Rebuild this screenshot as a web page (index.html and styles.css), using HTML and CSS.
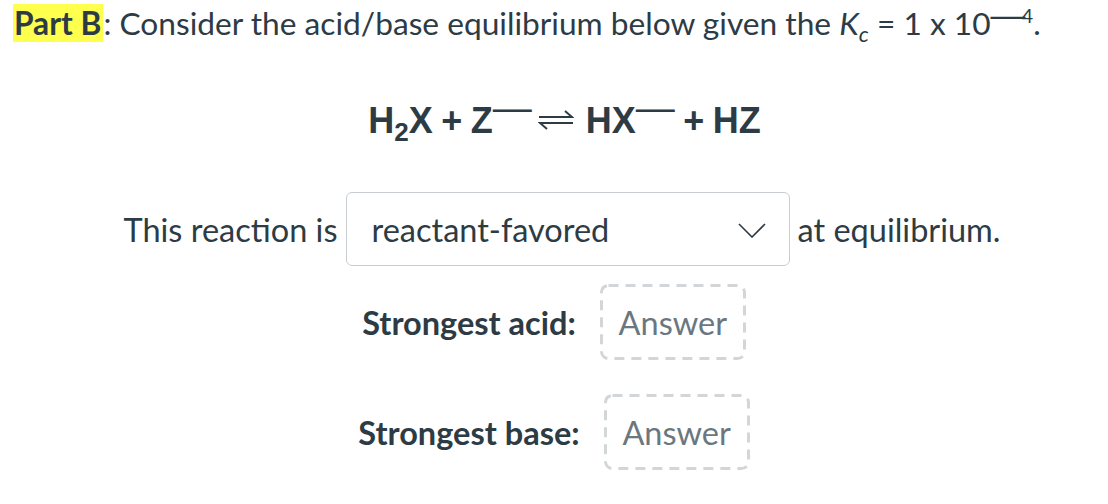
FILE: index.html
```html
<!DOCTYPE html>
<html>
<head>
<meta charset="utf-8">
<link rel="stylesheet" href="styles.css">
</head>
<body>
<div class="page">
  <p class="title"><span class="hl"><b>Part B</b></span>: Consider the acid/base equilibrium below given the <i>K<sub>c</sub></i> = 1 x 10<span class="expdash">—</span><sup class="expnum">4</sup>.</p>

  <div class="equation">
    <span>H<sub>2</sub>X + Z<sup class="neg">—</sup></span>
    <svg class="eqarrow" width="36" height="22" viewBox="0 0 36 22"><path d="M1 7 H34 L27 1" fill="none" stroke="#2d3b45" stroke-width="2"/><path d="M35 13 H2 L9 19" fill="none" stroke="#2d3b45" stroke-width="2"/></svg>
    <span>HX<sup class="neg">—</sup> + HZ</span>
  </div>

  <div class="sentence">
    <span>This reaction is</span>
    <div class="select">
      <span>reactant-favored</span>
      <svg class="chev" width="28" height="15" viewBox="0 0 28 15"><path d="M1 1 L14 14 L27 1" fill="none" stroke="#2d3b45" stroke-width="1.6"/></svg>
    </div>
    <span>at equilibrium.</span>
  </div>

  <div class="drop acid">
    <span class="label">Strongest acid:</span>
    <div class="answer">
      <svg class="dash" width="146" height="76" viewBox="0 0 146 76"><rect x="1.5" y="1.5" width="143" height="73" rx="7" fill="none" stroke="#d3d6d9" stroke-width="3" stroke-dasharray="10 7"/></svg>
      <span>Answer</span>
    </div>
  </div>
  <div class="drop base">
    <span class="label">Strongest base:</span>
    <div class="answer">
      <svg class="dash" width="146" height="76" viewBox="0 0 146 76"><rect x="1.5" y="1.5" width="143" height="73" rx="7" fill="none" stroke="#d3d6d9" stroke-width="3" stroke-dasharray="10 7"/></svg>
      <span>Answer</span>
    </div>
  </div>
</div>
</body>
</html>
```
FILE: styles.css
```css
html, body {
  margin: 0;
  padding: 0;
  background: #fff;
}
.page {
  width: 1108px;
  height: 504px;
  font-family: Lato, "Liberation Sans", sans-serif;
  color: #2d3b45;
  font-size: 32.5px;
}
.title {
  margin: 0;
  padding: 4px 0 0 13px;
  line-height: 38px;
  font-size: 31.7px;
  white-space: nowrap;
}
.hl {
  background: #ffff4d;
  padding: 0 2px 0 1px;
}
.title i {
  font-style: italic;
}
.title sub {
  font-size: 22px;
  vertical-align: -7px;
  line-height: 0;
}
.expdash {
  font-family: "Liberation Sans", Arial, sans-serif;
  font-size: 35px;
  vertical-align: 8px;
  line-height: 0;
}
.expnum {
  font-size: 20px;
  vertical-align: 12px;
  line-height: 0;
  margin-left: -4px;
}
.equation {
  display: flex;
  justify-content: center;
  align-items: center;
  gap: 6px;
  margin-top: 54px;
  font-family: "Liberation Sans", Arial, sans-serif;
  font-weight: bold;
  font-size: 36px;
  height: 50px;
  white-space: nowrap;
  padding-left: 21px;
  word-spacing: -1.5px;
}
.equation sub {
  font-size: 26px;
  vertical-align: -8px;
  line-height: 0;
}
.equation .neg {
  font-size: 39px;
  font-weight: normal;
  vertical-align: 12px;
  line-height: 0;
}
.eqarrow {
  margin: 0 6px 0 0;
}
.sentence {
  display: flex;
  justify-content: center;
  align-items: center;
  gap: 8px;
  margin-top: 46px;
  padding-left: 16px;
}
.select {
  width: 444px;
  height: 74px;
  box-sizing: border-box;
  border: 1px solid #c7cdd1;
  border-radius: 6px;
  display: flex;
  align-items: center;
  justify-content: space-between;
  padding: 0 23px 0 25px;
}
.chev {
  margin-top: 2px;
}
.drop {
  display: flex;
  justify-content: center;
  align-items: center;
  gap: 24px;
  font-weight: bold;
}
.acid {
  margin-top: 18px;
}
.base {
  margin-top: 34px;
}
.answer {
  position: relative;
  width: 146px;
  height: 76px;
  display: flex;
  align-items: center;
  justify-content: center;
  font-weight: normal;
  color: #6b7780;
}
.answer .dash {
  position: absolute;
  left: 0;
  top: 0;
}
.answer span {
  position: relative;
}
```
